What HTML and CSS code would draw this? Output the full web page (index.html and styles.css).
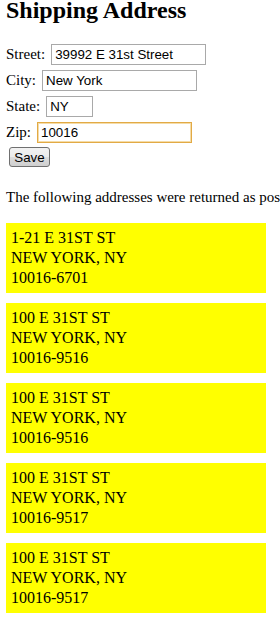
FILE: index.html
```html
<!DOCTYPE html>
<html lang="en">
<head>
    <meta charset="UTF-8">
    <meta name="viewport" content="width=device-width, initial-scale=1.0">
    <title>Shipping Address</title>
    <link rel="stylesheet" href="styles.css">
</head>
<body>
    <h2 class="title">Shipping Address</h2>

    <form class="address-form" onsubmit="return false;">
        <div class="field">
            <label for="street">Street:</label>
            <input type="text" id="street" class="text-input" value="39992 E 31st Street">
        </div>
        <div class="field">
            <label for="city">City:</label>
            <input type="text" id="city" class="text-input" value="New York">
        </div>
        <div class="field">
            <label for="state">State:</label>
            <input type="text" id="state" class="text-input state-input" value="NY">
        </div>
        <div class="field">
            <label for="zip">Zip:</label>
            <input type="text" id="zip" class="text-input active-input" value="10016">
        </div>
        <button type="submit" class="save-btn">Save</button>
    </form>

    <p class="notice">The following addresses were returned as possible matches for the address you entered.</p>

    <div class="results" id="results">
        <!-- filled by script -->
    </div>

    <script>
        const matches = [
            { street: '1-21 E 31ST ST', city: 'NEW YORK', state: 'NY', zip: '10016-6701' },
            { street: '100 E 31ST ST', city: 'NEW YORK', state: 'NY', zip: '10016-9516' },
            { street: '100 E 31ST ST', city: 'NEW YORK', state: 'NY', zip: '10016-9516' },
            { street: '100 E 31ST ST', city: 'NEW YORK', state: 'NY', zip: '10016-9517' },
            { street: '100 E 31ST ST', city: 'NEW YORK', state: 'NY', zip: '10016-9517' }
        ];

        const results = document.getElementById('results');
        matches.forEach(m => {
            const box = document.createElement('div');
            box.className = 'result';
            box.innerHTML = `${m.street}<br>${m.city}, ${m.state}<br>${m.zip}`;
            results.appendChild(box);
        });

        // put the cursor inside the zip code
        const zip = document.getElementById('zip');
        zip.focus();
        zip.setSelectionRange(3, 3);
    </script>
</body>
</html>
```

FILE: styles.css
```css
html, body {
    overflow: hidden;
}

body {
    margin: 0;
    padding: 0 6px;
    background: white;
    color: black;
    font-family: 'Liberation Serif', 'Times New Roman', serif;
    font-size: 16px;
}

.title {
    margin: 0;
    font-size: 24px;
    line-height: 20px;
}

.address-form {
    margin-top: 21px;
}

.field {
    display: flex;
    align-items: center;
    gap: 5px;
    height: 26px;
    font-size: 15px;
}

.field label {
    margin-right: 1px;
}

.text-input {
    box-sizing: border-box;
    width: 155px;
    height: 21px;
    margin: 0;
    padding: 0 3px;
    border: 1px solid #a9a9a9;
    border-radius: 0;
    font-family: 'Liberation Sans', Arial, sans-serif;
    font-size: 13.33px;
    color: black;
    outline: none;
}

.state-input {
    width: 47px;
}

.active-input,
.text-input:focus {
    border-color: #e2aa45;
    box-shadow: inset 0 0 0 1px #f5dca8;
}

.save-btn {
    box-sizing: border-box;
    width: 41px;
    height: 20px;
    margin: 2px 0 0 3px;
    padding: 0;
    border: 1px solid #707070;
    border-radius: 3px;
    background: linear-gradient(#f2f2f2, #ebebeb 50%, #dddddd 50%, #cfcfcf);
    font-family: 'Liberation Sans', Arial, sans-serif;
    font-size: 13.33px;
    color: black;
}

.notice {
    margin: 21px 0 17px;
    font-size: 15px;
    line-height: 18px;
    white-space: nowrap;
}

.result {
    box-sizing: border-box;
    width: 260px;
    height: 70px;
    margin-bottom: 10px;
    padding: 5px 5px;
    background: #ffff00;
    line-height: 20px;
}
```
